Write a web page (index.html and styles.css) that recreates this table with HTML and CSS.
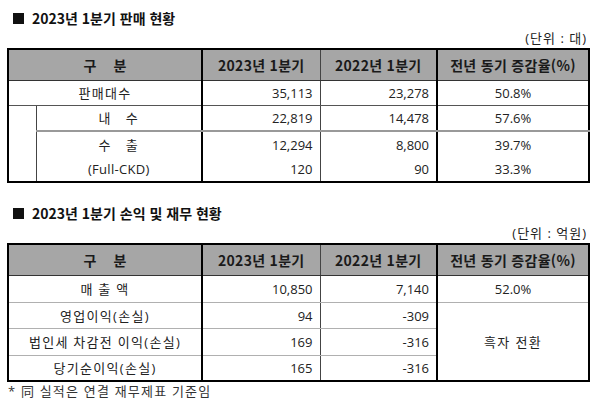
FILE: index.html
```html
<!DOCTYPE html>
<html lang="ko">
<head>
<meta charset="utf-8">
<link rel="stylesheet" href="styles.css">
</head>
<body>
<div class="page">
  <h2 class="title"><span class="sq"></span>2023년 1분기 판매 현황</h2>
  <div class="unit">(단위 : 대)</div>
  <table class="tbl t1">
    <colgroup><col class="w0"><col class="w1"><col class="w2"><col class="w3"><col class="w4"></colgroup>
    <thead>
      <tr><th colspan="2" class="lbl">구&nbsp;&nbsp;&nbsp;&nbsp;분</th><th class="cA">2023년 1분기</th><th class="cB">2022년 1분기</th><th class="cC">전년 동기 증감율(%)</th></tr>
    </thead>
    <tbody>
      <tr class="r1"><td colspan="2" class="lbl">판매대수</td><td class="num cA">35,113</td><td class="num cB">23,278</td><td class="pct cC">50.8%</td></tr>
      <tr class="r2"><td rowspan="3" class="sp"></td><td class="lbl sub">내&nbsp;&nbsp;&nbsp;수</td><td class="num cA">22,819</td><td class="num cB">14,478</td><td class="pct cC">57.6%</td></tr>
      <tr class="r3"><td class="lbl sub">수&nbsp;&nbsp;&nbsp;출</td><td class="num cA">12,294</td><td class="num cB">8,800</td><td class="pct cC">39.7%</td></tr>
      <tr class="r4"><td class="lbl sub latin">(Full-CKD)</td><td class="num cA">120</td><td class="num cB">90</td><td class="pct cC">33.3%</td></tr>
    </tbody>
  </table>

  <h2 class="title t2title"><span class="sq"></span>2023년 1분기 손익 및 재무 현황</h2>
  <div class="unit">(단위 : 억원)</div>
  <table class="tbl t2">
    <colgroup><col class="w01"><col class="w2"><col class="w3"><col class="w4"></colgroup>
    <thead>
      <tr><th class="lbl">구&nbsp;&nbsp;&nbsp;&nbsp;분</th><th class="cA">2023년 1분기</th><th class="cB">2022년 1분기</th><th class="cC">전년 동기 증감율(%)</th></tr>
    </thead>
    <tbody>
      <tr class="s1"><td class="lbl">매 출 액</td><td class="num cA">10,850</td><td class="num cB">7,140</td><td class="pct cC">52.0%</td></tr>
      <tr class="s2"><td class="lbl">영업이익(손실)</td><td class="num cA">94</td><td class="num cB">-309</td><td rowspan="3" class="pct cC turn">흑자 전환</td></tr>
      <tr class="s3"><td class="lbl">법인세 차감전 이익(손실)</td><td class="num cA">169</td><td class="num cB">-316</td></tr>
      <tr class="s4"><td class="lbl">당기순이익(손실)</td><td class="num cA">165</td><td class="num cB">-316</td></tr>
    </tbody>
  </table>
  <p class="note">* 同 실적은 연결 재무제표 기준임</p>
</div>
</body>
</html>
```

FILE: styles.css
```css
html, body {
  margin: 0;
  padding: 0;
  background: #fff;
}
body {
  font-family: "Open Sans", "Noto Sans CJK KR", sans-serif;
  color: #222;
  font-size: 13px;
}
.page {
  padding: 8px 12px 0 7px;
  width: 581px;
}
.title {
  margin: 0 0 0 6px;
  font-family: "Noto Sans CJK KR", sans-serif;
  font-size: 14px;
  font-weight: bold;
  line-height: 20px;
  height: 20px;
  display: flex;
  align-items: center;
  color: #111;
}
.sq {
  display: inline-block;
  width: 11px;
  height: 11px;
  background: #111;
  margin-right: 8px;
}
.unit {
  text-align: right;
  font-size: 13px;
  line-height: 16px;
  margin-top: 2px;
  padding-right: 1px;
  height: 18px;
  letter-spacing: 1px;
  color: #222;
}
.tbl {
  border-collapse: collapse;
  table-layout: fixed;
  width: 581px;
  border: 2px solid #000;
}
.w0 { width: 28px; }
.w1 { width: 166px; }
.w01 { width: 194px; }
.w2 { width: 118px; }
.w3 { width: 117px; }
.w4 { width: 152px; }
th, td {
  padding: 0;
  line-height: 16px;
  white-space: nowrap;
}
th {
  background: #a6a6a6;
  height: 30px;
  font-family: "Noto Sans CJK KR", sans-serif;
  font-weight: bold;
  font-size: 14px;
  letter-spacing: 0.3px;
  color: #1a1a1a;
  border-bottom: 1px solid #333;
  text-align: center;
}
td.lbl, th.lbl { text-align: center; }
td.lbl { letter-spacing: 1.3px; }
td.lbl.latin { letter-spacing: 0.3px; }
.turn { letter-spacing: 1.4px; }
.cA { border-left: 2px solid #000; }
.cB { border-left: 1px solid #444; }
.cC { border-left: 2px solid #000; }
.num { text-align: right; padding-right: 7px; }
.pct { text-align: center; }
.sp { border-right: 1px solid #444; }
.t1 .r1 td { height: 24px; border-bottom: 1px solid #555; }
.t1 .r2 td { height: 24px; }
.t1 .r2 td:not(.sp) { border-bottom: 2px solid #999; }
.t1 .r3 td { height: 25px; }
.t1 .r4 td { height: 24px; }
.t2title { margin-top: 20px; }
.t2 .s1 td { height: 26px; border-bottom: 1px solid #b0b0b0; }
.t2 .s2 td { height: 25px; }
.t2 .s2 td:not([rowspan]) { border-bottom: 1px solid #b0b0b0; }
.t2 .s3 td { height: 26px; border-bottom: 1px solid #b0b0b0; }
.t2 .s4 td { height: 24px; }
.note {
  margin: 1px 0 0 1px;
  font-size: 13px;
  line-height: 16px;
  letter-spacing: 1.2px;
  color: #333;
}
```
